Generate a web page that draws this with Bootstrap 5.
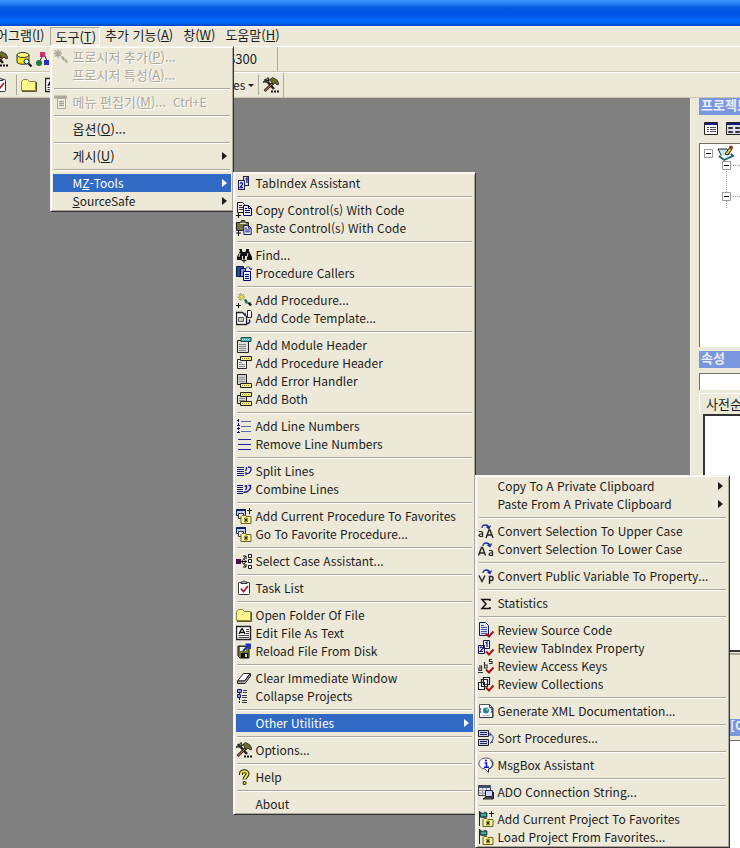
<!DOCTYPE html>
<html lang="ko">
<head>
<meta charset="utf-8">
<meta name="viewport" content="width=device-width, initial-scale=1">
<title>Visual Basic - MZ-Tools</title>
<link rel="stylesheet" href="https://cdn.jsdelivr.net/npm/bootstrap@5.3.0/dist/css/bootstrap.min.css">
<style>
:root{--face:#ece9d8;--shade:#aca899;--hot:#316ac5}
body{background:var(--face);font-family:"Noto Sans CJK KR",sans-serif;font-size:13px;line-height:18px;color:#1c1c1c}
button{font:inherit;color:inherit;line-height:18px}
svg{display:block;flex:none}
.ico{width:16px;height:16px}
.titlebar{height:26px;background:linear-gradient(#3a93fb 0,#2b86f6 3px,#0b60e8 7px,#0055e3 10px,#0257e8 16px,#0567fb 20px,#0565f6 23px,#0242bd 26px)}
.menubar{height:20px;border-top:1px solid #f8f6ee}
.menubar .top-btn{border:0;background:none;padding:0 5px;white-space:nowrap;line-height:16px}
.menubar .top-btn.open{border:1px solid;border-color:var(--shade) #fff #fff var(--shade);padding:0 3px 0 5px;height:19px;line-height:16px}
.menubar>.first{margin-left:-9px}
.band{height:26px;border-top:1px solid #fff;border-bottom:1px solid #c9c5b2}
.band .edge{border-right:1px solid var(--shade)}
.band button{border:0;background:none;padding:0}
.band .clip-l{margin-left:-8px}
.band .wide-end{padding-right:20px}
.covered{width:172px}
.vline{width:1px;height:20px;background:var(--shade)}
.mdi{background:#808080}
.dock{flex:0 0 50px;padding-left:8px;border-left:1px solid #f8f6ee}
.dock-title{background:#7a96df;color:#e9efff;height:17px;line-height:14px;font-weight:700;padding-left:2px;white-space:nowrap;overflow:hidden}
.dock-title.far{padding-left:31px}
.dock-tools{height:28px;gap:6px;padding-left:5px}
.sunk{background:#fff;border:solid #716f64;border-width:1px 0 0 1px}
.tree{height:204px;padding:1px 0 0 4px}
.branch{margin-left:22px;height:47px;border-left:1px dotted #999}
.branch .node{margin-left:-5px;gap:2px}
.branch .node::after{content:"";width:10px;border-top:1px dotted #999}
.branch .node+.node{margin-top:22px}
.combo{appearance:none;height:17px;width:100%;border:solid #716f64;border-width:1px 0 0 1px;background:#fff;margin:5px 0 3px;border-radius:0;padding:0;display:block}
.tabbtn{border:1px solid #fff;border-width:1px 0 0 1px;background:none;padding:0 0 0 6px;height:21px;line-height:16px;white-space:nowrap;overflow:hidden;text-align:left}
.props{border:2px solid #333;border-right:0;margin-left:4px;height:238px}
.immediate-gap{height:66px;border-top:2px solid var(--shade);margin-top:1px}
.menu-pop{position:absolute;z-index:10;list-style:none;margin:0;background:var(--face);border:1px solid;border-color:#f4f2e8 #333 #333 #f4f2e8;box-shadow:inset 1px 1px #fff,inset -1px -1px var(--shade);padding:1px 2px}
.menu-pop li{position:relative}
.menu-pop .cmd{display:flex;align-items:center;width:100%;height:18px;padding:0;border:0;background:none;text-align:left;white-space:nowrap;line-height:18px}
.menu-pop .cmd>.ico,.menu-pop .cmd>.no-ico{width:16px;margin-right:4px;flex:none}
.menu-pop .cmd.hot{background:var(--hot);color:#fff}
.menu-pop .cmd:disabled{color:var(--shade);text-shadow:1px 1px #fff}
.menu-pop .cmd.more::after{content:"";margin-left:auto;margin-right:4px;border:4px solid transparent;border-left:5px solid;border-right:0}
.menu-pop .rule{height:9px;padding:4px 1px 0}
.menu-pop .rule::before{content:"";display:block;height:2px;background:linear-gradient(var(--shade) 50%,#fff 50%)}
.pop-tools{left:0;top:100%;width:184px}
.pop-mz{left:100%;top:-2px;margin-left:2px;width:243px}
.pop-util{left:100%;bottom:-116px;margin-left:2px;width:255px}
.pop-mz,.latin{font-size:12px}
u{text-underline-offset:1px}
</style>
<script src="https://cdn.jsdelivr.net/npm/bootstrap@5.3.0/dist/js/bootstrap.bundle.min.js"></script>
</head>
<body class="vh-100 overflow-hidden d-flex flex-column">
<svg width="0" height="0" class="position-absolute" aria-hidden="true">
<defs>
<symbol id="tab" viewBox="0 0 16 16"><g shape-rendering="crispEdges"><path d="M7.500 1.500h5v9h-5z" fill="#dfe3f5" stroke="#222244"/><path d="M2.500 5.500h6v9h-6z" fill="#dfe3f5" stroke="#222244"/></g><path d="M9.500 4l1.500-1v5M4 8.500c1-1.500 3-.5 2.500.8L4 12.500h3" fill="none" stroke="#1a1aa0" stroke-width="1.300"/></symbol>
<symbol id="page" viewBox="0 0 9 11"><path d="M.5.5h5l3 3v7h-8z" fill="#e8ecff" stroke="#000070"/><path d="M5.500.5v3h3M2 3.500h2M2 5.500h5M2 7.500h5" stroke="#000070" fill="none"/></symbol>
<symbol id="copy" viewBox="0 0 16 16"><path d="M1.500.5h5l2 2v8h-7z" fill="#eee" stroke="#222"/><path d="M3 3.500h3M3 5.500h4M3 7.500h4" stroke="#333"/><use href="#page" x="7" y="3" width="9" height="11"/><path d="M2.500 11v5M0 13.500h5" stroke="#111"/></symbol>
<symbol id="paste" viewBox="0 0 16 16"><path d="M.5 2.500h4l1-2h3l1 2h3v8H.5z" fill="#77743a" stroke="#222"/><path d="M4 3.500h6" stroke="#ddd"/><use href="#page" x="7" y="5" width="9" height="10"/><path d="M2.500 10v6M0 13h5" stroke="#111"/></symbol>
<symbol id="find" viewBox="0 0 16 16"><path d="M3 2h3v2l1 1h2l1-1V2h3v2l3 6v3h-5V9H9v3H7V9H6v4H1v-3l3-6z" fill="#111"/><path d="M4 6l-1 4M12 6l-1 4" stroke="#ddd"/><path d="M8 10v6M5.500 13.500h5" stroke="#111"/></symbol>
<symbol id="callers" viewBox="0 0 16 16"><path d="M.5 1.500h7v10h-7z" fill="#1c4f78" stroke="#102050"/><path d="M4.500 3.500h5v8h-5z" fill="#7d9bc8" stroke="#000070"/><path d="M7.500 6.500h7v9h-7z" fill="#eef" stroke="#000070"/><path d="M9 9.500h4M9 11.500h4M9 13.500h4" stroke="#000090"/><path d="M10 4c0-3 5-3 5 1M13 3l2 2 1-2" fill="none" stroke="#3344a0"/></symbol>
<symbol id="addproc" viewBox="0 0 16 16"><path d="M5 1v8M1.500 5H9M2.500 2l6 6M8 2L3 8" stroke="#8d8f2c"/><circle cx="5.500" cy="5" r="1.500" fill="#e8e04a"/><path d="M8 8l2-1 2 3-2 2z" fill="#126464"/><path d="M11 11l3-1 2 3-2 1z" fill="#111"/><path d="M2.500 11v5M0 13.500h5" stroke="#111"/></symbol>
<symbol id="template" viewBox="0 0 16 16"><path d="M.5 2.500h6l4 4v8H.5z" fill="#fff" stroke="#222" stroke-width="1.300"/><path d="M2.500 7.500h5v4h-5z" stroke="#555" fill="#ccc"/><path d="M11.500.5h3l1 1v6h-4z" fill="#fff" stroke="#222"/><path d="M9 3v3M13 9.500c2 2 0 4-2 4" stroke="#222299" fill="none" stroke-width="1.500"/></symbol>
<symbol id="modhead" viewBox="0 0 16 16"><path d="M1.500 3.500h11v12h-11z" fill="#ddd" stroke="#222"/><path d="M3 7.500h7M3 9.500h7M3 11.500h7M3 13.500h7" stroke="#888"/><path d="M5 .5h10v4H5z" fill="#4cb4bc" stroke="#174b50"/><path d="M6 2.500h8" stroke="#b4f0f0" stroke-dasharray="1 1"/></symbol>
<symbol id="prochead" viewBox="0 0 16 16"><path d="M1.500 4.500h9v9h-9z" fill="#eee" stroke="#222"/><path d="M3 7.500h3M3 9.500h6M3 11.500h6" stroke="#888"/><path d="M4.500 1.500h11v4h-11z" fill="#f2ee86" stroke="#222"/><path d="M6 3.500h8" stroke="#8b8830" stroke-dasharray="1 1"/></symbol>
<symbol id="error" viewBox="0 0 16 16"><path d="M1.500 1.500h9v10h-9z" fill="#ccc" stroke="#222"/><path d="M3 4.500h6M3 6.500h6M3 8.500h6" stroke="#999"/><path d="M4.500 10.500h11v4h-11z" fill="#f2ee86" stroke="#222"/><path d="M6 12.500h8" stroke="#8b8830" stroke-dasharray="1 1"/></symbol>
<symbol id="both" viewBox="0 0 16 16"><path d="M1.500 4.500h9v8h-9z" fill="#ddd" stroke="#222"/><path d="M3 7.500h6M3 9.500h6" stroke="#888"/><path d="M4.500 1.500h11v4h-11zM4.500 10.500h11v4h-11z" fill="#f2ee86" stroke="#222"/><path d="M6 3.500h8M6 12.500h8" stroke="#8b8830" stroke-dasharray="1 1"/></symbol>
<symbol id="addln" viewBox="0 0 16 16"><path d="M5 3.500h10M5 8.500h10M5 13.500h10" stroke="#5a68a4"/><path d="M2.500 1v14" stroke="#111188" stroke-dasharray="3 1"/><path d="M1 2.500h1M1 7.500h3M1 10.500h3M1 14.500h3" stroke="#111188"/></symbol>
<symbol id="remln" viewBox="0 0 16 16"><path d="M2 3.500h13M2 8.500h13M2 13.500h13" stroke="#22229a"/></symbol>
<symbol id="split" viewBox="0 0 16 16"><path d="M1 4.500h7M1 6.500h7M1 8.500h7M1 10.500h7M1 12.500h7" stroke="#1a1a80"/><path d="M10.500 4v2l-1 2M12 4c4 0 4 3 1 6l-3 1M10 9v3" stroke="#1a1a90" stroke-width="1.300" fill="none"/></symbol>
<symbol id="combine" viewBox="0 0 16 16"><path d="M1 4.500h6M1 6.500h6M1 8.500h6M1 10.500h6M1 12.500h6" stroke="#111166"/><path d="M8.500 5h2v2l-1 2M12.500 4.500h2v3l-3 3-4 1" stroke="#1a1a90" stroke-width="1.400" fill="none"/></symbol>
<symbol id="star" viewBox="0 0 11 9"><path d="M.5 1.500l1-1h3l1 1h5v7H.5z" fill="#fbf58b" stroke="#66622a"/><path d="M5.500 2.500v5M3.500 3.500l4 3M7.500 3.500l-4 3" stroke="#222"/></symbol>
<symbol id="favbase" viewBox="0 0 16 16"><path d="M.5 1.500h9v6h-9z" fill="#c3d1e9" stroke="#10205f"/><path d="M1 2h9" stroke="#10205f" stroke-width="2"/><path d="M2.500 5.500h5v5h-5z" fill="#eef" stroke="#333"/><use href="#star" x="4" y="7" width="12" height="9"/></symbol>
<symbol id="favadd" viewBox="0 0 16 16"><use href="#favbase"/><path d="M13.500 0v6M11 2.500h5" stroke="#222"/></symbol>
<symbol id="select" viewBox="0 0 16 16"><path d="M0 6h5v5H0z" fill="#4b1048"/><path d="M4 8.500h7M6 8l4-5M6 9l4 5M7 3h3v3M7 14h3v-3M8 6l2 2.500L8 11" stroke="#111" fill="none"/><path d="M12.500 1.500h3v3h-3zM12.500 6.500h3v3h-3zM12.500 12.500h3v3h-3z" fill="#fff" stroke="#111"/></symbol>
<symbol id="task" viewBox="0 0 16 16"><rect x="2.500" y="2.500" width="11" height="12" rx="1" fill="#fff" stroke="#333"/><path d="M5 3.500V2h1.500l1-1h1l1 1H11v1.500z" fill="#bbb" stroke="#333"/><path d="M5 8.500l2.500 3L12 6" stroke="#a02030" stroke-width="1.800" fill="none"/></symbol>
<symbol id="folder" viewBox="0 0 16 16"><path d="M.5 4.500l2-2h4l2 2h6v9H.5z" fill="#fcf78c" stroke="#8a8640"/><path d="M1 14.500h14.500V5" stroke="#55522a" fill="none"/></symbol>
<symbol id="edit" viewBox="0 0 16 16"><path d="M.5 1.500h14v13H.5z" fill="#fff" stroke="#222" stroke-width="1.400"/><path d="M3 9l2.500-5h1L9 9M4 7.500h4" stroke="#111" fill="none" stroke-width="1.400"/><path d="M10 4.500h3M10 6.500h3M10 8.500h3M2.500 10.500H13M2.500 12.500H13" stroke="#444"/></symbol>
<symbol id="disk" viewBox="0 0 16 16"><path d="M2 3h11v12H4l-2-2z" fill="#77752c" stroke="#111"/><path d="M4 4h6v4H4z" fill="#e8ecf4"/><path d="M5 10h7v5H5z" fill="#111"/><path d="M9 11h2v3H9z" fill="#ddd"/><path d="M7 8l6-6M9.500 1.500H14V6" stroke="#1530c8" stroke-width="1.800" fill="none"/></symbol>
<symbol id="eraser" viewBox="0 0 16 16"><path d="M1.500 11l6-7.500h6.500l-5.500 7.500z" fill="#fff" stroke="#222"/><path d="M1.500 11v2.500H9l5.500-7.500V3.500L8.500 11z" fill="#aaa" stroke="#222"/></symbol>
<symbol id="collapse" viewBox="0 0 16 16"><path d="M3.500 1v14" stroke="#111188" stroke-dasharray="2 1"/><path d="M1.500 1.500h4v3h-4zM1.500 6.500h3v3h-3z" fill="#8ea0e0" stroke="#111188"/><path d="M7 2.500h4M7 4.500h4M6 7.500h5M6 9.500h5M6 12.500h5M6 14.500h5" stroke="#333"/></symbol>
<symbol id="tools" viewBox="0 0 16 16"><path d="M2 2l9 10" stroke="#222" stroke-width="2.600"/><path d="M0 5.500l2-1.500 2 1L6 3 4.500.5" stroke="#333" stroke-width="1.800" fill="none"/><path d="M10.500 5.500L1.500 14" stroke="#3a1810" stroke-width="2.600"/><path d="M10 6L2 13.500" stroke="#c09a6a"/><path d="M7 2.500L9.500.5 14 3l2 4-2 1-2-2-2 1.500z" fill="#6c6c28" stroke="#222" stroke-width=".8"/><path d="M8 14.500h2M11 14.500h2M14 14.500h2" stroke="#111" stroke-width="2"/></symbol>
<symbol id="help" viewBox="0 0 16 16"><path d="M5 6V4.500C5 1.500 12 1.500 11.500 5c0 2.500-3 2.500-3 5.500" stroke="#222" stroke-width="4" fill="none"/><circle cx="8.500" cy="14" r="2" fill="#222"/><path d="M5 6V4.500C5 1.500 12 1.500 11.500 5c0 2.500-3 2.500-3 5.500" stroke="#efe63a" stroke-width="2" fill="none"/><circle cx="8.500" cy="14" r="1" fill="#efe63a"/></symbol>
<symbol id="arc" viewBox="0 0 16 16"><path d="M4 5c0-4 6-4 7 0M8.500 4l2.500 1.500 1.500-3" stroke="#1c2c9c" stroke-width="1.300" fill="none"/></symbol>
<symbol id="upper" viewBox="0 0 16 16"><use href="#arc"/><path d="M1 8.500h2.500l1 1V14M4 11H2l-1 1.500 1 1h2" stroke="#222" stroke-width="1.200" fill="none"/><path d="M8 15l3-8h1l3 8M9 12h5" stroke="#222" stroke-width="1.400" fill="none"/></symbol>
<symbol id="lower" viewBox="0 0 16 16"><use href="#arc" x="1"/><path d="M.5 14.500l3-8h1l3 8M1.500 12h5" stroke="#222" stroke-width="1.400" fill="none"/><path d="M11 9.500h2.500l1 1V15M14 12h-2l-1 1.500 1 1h2" stroke="#222" stroke-width="1.200" fill="none"/></symbol>
<symbol id="vp" viewBox="0 0 16 16"><use href="#arc" x="1"/><path d="M1 7.500l3 6 3-6" stroke="#222" stroke-width="1.400" fill="none"/><path d="M11.500 16V8.500h2.500l1 1v2l-1 1h-2.500" stroke="#222" stroke-width="1.400" fill="none"/></symbol>
<symbol id="sigma" viewBox="0 0 16 16"><path d="M12 6V4.500H4L8 9l-4 4.500h8V12" stroke="#111" stroke-width="1.500" fill="none"/></symbol>
<symbol id="check" viewBox="0 0 16 16"><path d="M8 11.500l3 3 4.500-5" stroke="#a3161e" stroke-width="2" fill="none"/></symbol>
<symbol id="rsource" viewBox="0 0 16 16"><path d="M1.500.5h6l3 3v10h-9z" fill="#dfe5fb" stroke="#181850"/><path d="M3 3.500h3M3 5.500h6M3 7.500h6M3 9.500h6M3 11.500h5" stroke="#4050b0"/><use href="#check"/></symbol>
<symbol id="rtab" viewBox="0 0 16 16"><path d="M5.500.5h6v8h-6zM.5 5.500h6v8h-6z" fill="#e8ecff" stroke="#181850"/><path d="M7.500 3L9 2v5M2 8c1-1.500 3-.5 2.500.8L2 11.500h3" fill="none" stroke="#1a1aa0" stroke-width="1.200"/><use href="#check"/></symbol>
<symbol id="raccess" viewBox="0 0 16 16"><path d="M1 8h2.500v4.500H1V10h2M6.500 4v6H9V7H6.500M14 1.500h-2.500v2H14v2h-3" stroke="#333" stroke-width="1.200" fill="none"/><path d="M0 14.500h5" stroke="#333"/><use href="#check"/></symbol>
<symbol id="rcoll" viewBox="0 0 16 16"><path d="M5.500 1.500h6v7h-6zM3.500 3.500h6v7h-6zM.5 6.500h6v7h-6z" fill="#fff" stroke="#222" stroke-width="1.200"/><use href="#check"/></symbol>
<symbol id="xml" viewBox="0 0 16 16"><path d="M1.500 1.500h10l3 3v10h-13z" fill="#fff" stroke="#555"/><path d="M11.500 1.500v3h3M2 14.500h13V5" stroke="#333" fill="none"/><circle cx="8" cy="7.500" r="3" fill="#28808c"/><path d="M3 5L2 7.500 3 10M13 5l1 2.500-1 2.500" stroke="#2a50b0" fill="none"/><circle cx="9" cy="6.500" r="1" fill="#9fe0d8"/><path d="M4 12.500h8" stroke="#b0b8d0"/></symbol>
<symbol id="sort" viewBox="0 0 16 16"><path d="M.5.5h10v6H.5zM.5 9.500h10v6H.5z" fill="#c5cdea" stroke="#222"/><path d="M2 2.500h7M2 4.500h7M2 11.500h7M2 13.500h7" stroke="#222266"/><path d="M12 4c4 1 4 6 1 8M12 13l3-1M12 2.500V6" stroke="#1c2c9c" fill="none"/></symbol>
<symbol id="msg" viewBox="0 0 16 16"><path d="M8 1c9 0 9 10 2.500 11v3.500L7 12C-1.500 11.500-1 1 8 1z" fill="#fff" stroke="#555"/><path d="M12.500 3c4 4 1 8-2 9v3" fill="none" stroke="#222"/><path d="M6.500 6H8.500v4M6 10.300h5" stroke="#1010d8" stroke-width="1.500" fill="none"/><circle cx="8" cy="3.500" r="1.100" fill="#1010d8"/></symbol>
<symbol id="ado" viewBox="0 0 16 16"><path d="M.5 1.500h12v10H.5z" fill="#e8e8f0" stroke="#444"/><path d="M1 3h12" stroke="#444c78" stroke-width="2"/><path d="M4.500 4v7M8.500 4v7M1 6.500h11M1 9h11" stroke="#99a"/><path d="M7.500 6.500h7v6h-7z" fill="#cdd6f6" stroke="#222244"/><path d="M5 15h10v-2H8zM15.500 8v7" fill="#667" stroke="#222"/></symbol>
<symbol id="projload" viewBox="0 0 16 16"><path d="M1.500 0v15" stroke="#223"/><path d="M2 1l3 1.500 2-1.500 2 1v4L6 7 2 6z" fill="#1c6a68" stroke="#123" stroke-width=".6"/><path d="M3 4h5" stroke="#8cc"/><use href="#star" x="4" y="7" width="12" height="9"/></symbol>
<symbol id="projadd" viewBox="0 0 16 16"><use href="#projload"/><path d="M13.500 0v6M11 2.500h5" stroke="#222"/></symbol>
<symbol id="procoff" viewBox="0 0 16 16"><path d="M5 0v9M1 4.500h8M2 1.500l6 6M8 1.500l-6 6" stroke="#aca899" stroke-width="1.300"/><path d="M8 8l2-1 2 3-2 2zM11 11l2-1 2 3-2 1z" fill="#aca899"/></symbol>
<symbol id="menuoff" viewBox="0 0 16 16"><path d="M1 3h13" stroke="#aca899" stroke-width="3"/><path d="M4.500 4.500h8v10h-8z" fill="#f4f2e8" stroke="#aca899"/><path d="M6 7.500h5M6 9.500h5M6 11.500h5" stroke="#aca899" stroke-width="1.300"/></symbol>
<symbol id="db" viewBox="0 0 16 16"><path d="M1 4v7c0 3 12 3 12 0V4" fill="#eee22c" stroke="#333"/><ellipse cx="7" cy="4" rx="6" ry="2.500" fill="#fbf780" stroke="#333"/><circle cx="10.500" cy="10.500" r="2.500" fill="#cfe" stroke="#222"/><path d="M12.500 12.500L15.500 15.500" stroke="#111" stroke-width="2"/></symbol>
<symbol id="shapes" viewBox="0 0 16 16"><path d="M3 11L8 3l3 7" stroke="#225" fill="none"/><circle cx="3" cy="12" r="3" fill="#22793a"/><path d="M4 1h5v5H4z" fill="#cc2f6a"/><path d="M8 9h5v5H8z" fill="#2433b8"/></symbol>
<symbol id="form" viewBox="0 0 16 16"><path d="M.5 1.500h13v12H.5z" fill="#fff" stroke="#222"/><path d="M1 3h13" stroke="#141c7c" stroke-width="2"/><path d="M3 6.500h2M3 8.500h2M3 10.500h2M6 6.500h6M6 8.500h6M6 10.500h6" stroke="#555"/></symbol>
<symbol id="objview" viewBox="0 0 16 16"><path d="M.5 1.500h15v12H.5z" fill="#dde" stroke="#222"/><path d="M1 3h15" stroke="#141c7c" stroke-width="2"/><path d="M2.500 6.500h4v1h-4zM2.500 10.500h4v1h-4zM9.500 6.500h4v1h-4zM9.500 10.500h4v1h-4z" fill="#fff" stroke="#333"/></symbol>
<symbol id="vbproj" viewBox="0 0 18 16"><path d="M1 4h9l3 6-8 2z" fill="#bfe8ec" stroke="#222"/><path d="M2 11l5 4 9-4-2-2" stroke="#156468" stroke-width="1.800" fill="#eee"/><path d="M8 9l5-7 2 2-4 6z" fill="#e8c838" stroke="#222"/><circle cx="14" cy="2.500" r="2" fill="#8c3c28"/></symbol>
<symbol id="minus" viewBox="0 0 9 9"><path d="M.5.5h8v8h-8z" fill="#fff" stroke="#999"/><path d="M2 4.500h5" stroke="#111"/></symbol>
</defs>
</svg>

<header>
  <div class="titlebar"></div>
  <nav class="menubar d-flex align-items-start" aria-label="메뉴">
    <button type="button" class="top-btn first">어그램(<u>I</u>)</button>
    <div class="position-relative">
      <button type="button" class="top-btn open" aria-expanded="true">도구(<u>T</u>)</button>
      <ul class="menu-pop pop-tools">
        <li><button class="cmd" disabled><svg class="ico"><use href="#procoff"/></svg>프로시저 추가(<u>P</u>)...</button></li>
        <li><button class="cmd" disabled><span class="no-ico"></span>프로시저 특성(<u>A</u>)...</button></li>
        <li class="rule"></li>
        <li><button class="cmd" disabled><svg class="ico"><use href="#menuoff"/></svg>메뉴 편집기(<u>M</u>)...<span class="latin ms-auto me-4">Ctrl+E</span></button></li>
        <li class="rule"></li>
        <li><button class="cmd"><span class="no-ico"></span>옵션(<u>O</u>)...</button></li>
        <li class="rule"></li>
        <li><button class="cmd more"><span class="no-ico"></span>게시(<u>U</u>)</button></li>
        <li class="rule"></li>
        <li><button class="cmd more hot" aria-expanded="true"><span class="no-ico"></span><span class="latin">M<u>Z</u>-Tools</span></button>
          <ul class="menu-pop pop-mz">
            <li><button class="cmd"><svg class="ico"><use href="#tab"/></svg>TabIndex Assistant</button></li>
            <li class="rule"></li>
            <li><button class="cmd"><svg class="ico"><use href="#copy"/></svg>Copy Control(s) With Code</button></li>
            <li><button class="cmd"><svg class="ico"><use href="#paste"/></svg>Paste Control(s) With Code</button></li>
            <li class="rule"></li>
            <li><button class="cmd"><svg class="ico"><use href="#find"/></svg>Find...</button></li>
            <li><button class="cmd"><svg class="ico"><use href="#callers"/></svg>Procedure Callers</button></li>
            <li class="rule"></li>
            <li><button class="cmd"><svg class="ico"><use href="#addproc"/></svg>Add Procedure...</button></li>
            <li><button class="cmd"><svg class="ico"><use href="#template"/></svg>Add Code Template...</button></li>
            <li class="rule"></li>
            <li><button class="cmd"><svg class="ico"><use href="#modhead"/></svg>Add Module Header</button></li>
            <li><button class="cmd"><svg class="ico"><use href="#prochead"/></svg>Add Procedure Header</button></li>
            <li><button class="cmd"><svg class="ico"><use href="#error"/></svg>Add Error Handler</button></li>
            <li><button class="cmd"><svg class="ico"><use href="#both"/></svg>Add Both</button></li>
            <li class="rule"></li>
            <li><button class="cmd"><svg class="ico"><use href="#addln"/></svg>Add Line Numbers</button></li>
            <li><button class="cmd"><svg class="ico"><use href="#remln"/></svg>Remove Line Numbers</button></li>
            <li class="rule"></li>
            <li><button class="cmd"><svg class="ico"><use href="#split"/></svg>Split Lines</button></li>
            <li><button class="cmd"><svg class="ico"><use href="#combine"/></svg>Combine Lines</button></li>
            <li class="rule"></li>
            <li><button class="cmd"><svg class="ico"><use href="#favadd"/></svg>Add Current Procedure To Favorites</button></li>
            <li><button class="cmd"><svg class="ico"><use href="#favbase"/></svg>Go To Favorite Procedure...</button></li>
            <li class="rule"></li>
            <li><button class="cmd"><svg class="ico"><use href="#select"/></svg>Select Case Assistant...</button></li>
            <li class="rule"></li>
            <li><button class="cmd"><svg class="ico"><use href="#task"/></svg>Task List</button></li>
            <li class="rule"></li>
            <li><button class="cmd"><svg class="ico"><use href="#folder"/></svg>Open Folder Of File</button></li>
            <li><button class="cmd"><svg class="ico"><use href="#edit"/></svg>Edit File As Text</button></li>
            <li><button class="cmd"><svg class="ico"><use href="#disk"/></svg>Reload File From Disk</button></li>
            <li class="rule"></li>
            <li><button class="cmd"><svg class="ico"><use href="#eraser"/></svg>Clear Immediate Window</button></li>
            <li><button class="cmd"><svg class="ico"><use href="#collapse"/></svg>Collapse Projects</button></li>
            <li class="rule"></li>
            <li><button class="cmd more hot" aria-expanded="true"><span class="no-ico"></span>Other Utilities</button>
              <ul class="menu-pop pop-util">
                <li><button class="cmd more"><span class="no-ico"></span>Copy To A Private Clipboard</button></li>
                <li><button class="cmd more"><span class="no-ico"></span>Paste From A Private Clipboard</button></li>
                <li class="rule"></li>
                <li><button class="cmd"><svg class="ico"><use href="#upper"/></svg>Convert Selection To Upper Case</button></li>
                <li><button class="cmd"><svg class="ico"><use href="#lower"/></svg>Convert Selection To Lower Case</button></li>
                <li class="rule"></li>
                <li><button class="cmd"><svg class="ico"><use href="#vp"/></svg>Convert Public Variable To Property...</button></li>
                <li class="rule"></li>
                <li><button class="cmd"><svg class="ico"><use href="#sigma"/></svg>Statistics</button></li>
                <li class="rule"></li>
                <li><button class="cmd"><svg class="ico"><use href="#rsource"/></svg>Review Source Code</button></li>
                <li><button class="cmd"><svg class="ico"><use href="#rtab"/></svg>Review TabIndex Property</button></li>
                <li><button class="cmd"><svg class="ico"><use href="#raccess"/></svg>Review Access Keys</button></li>
                <li><button class="cmd"><svg class="ico"><use href="#rcoll"/></svg>Review Collections</button></li>
                <li class="rule"></li>
                <li><button class="cmd"><svg class="ico"><use href="#xml"/></svg>Generate XML Documentation...</button></li>
                <li class="rule"></li>
                <li><button class="cmd"><svg class="ico"><use href="#sort"/></svg>Sort Procedures...</button></li>
                <li class="rule"></li>
                <li><button class="cmd"><svg class="ico"><use href="#msg"/></svg>MsgBox Assistant</button></li>
                <li class="rule"></li>
                <li><button class="cmd"><svg class="ico"><use href="#ado"/></svg>ADO Connection String...</button></li>
                <li class="rule"></li>
                <li><button class="cmd"><svg class="ico"><use href="#projadd"/></svg>Add Current Project To Favorites</button></li>
                <li><button class="cmd"><svg class="ico"><use href="#projload"/></svg>Load Project From Favorites...</button></li>
              </ul>
            </li>
            <li class="rule"></li>
            <li><button class="cmd"><svg class="ico"><use href="#tools"/></svg>Options...</button></li>
            <li class="rule"></li>
            <li><button class="cmd"><svg class="ico"><use href="#help"/></svg>Help</button></li>
            <li class="rule"></li>
            <li><button class="cmd"><span class="no-ico"></span>About</button></li>
          </ul>
        </li>
        <li><button class="cmd more"><span class="no-ico"></span><span class="latin"><u>S</u>ourceSafe</span></button></li>
      </ul>
    </div>
    <button type="button" class="top-btn">추가 기능(<u>A</u>)</button>
    <button type="button" class="top-btn">창(<u>W</u>)</button>
    <button type="button" class="top-btn">도움말(<u>H</u>)</button>
  </nav>
  <div class="band d-flex">
    <div class="edge wide-end d-flex align-items-center">
      <button aria-label="도구 상자" class="clip-l"><svg class="ico"><use href="#tools"/></svg></button>
      <button aria-label="데이터 뷰" class="ms-2"><svg class="ico"><use href="#db"/></svg></button>
      <button aria-label="구성 요소" class="ms-1"><svg class="ico"><use href="#shapes"/></svg></button>
      <span class="covered me-1"></span><span>6300</span>
    </div>
  </div>
  <div class="band d-flex">
    <div class="edge d-flex align-items-center pe-1">
      <button aria-label="작업 목록" class="clip-l"><svg class="ico"><use href="#task"/></svg></button>
      <span class="vline ms-2 me-1"></span>
      <button aria-label="폴더"><svg class="ico"><use href="#folder"/></svg></button>
      <button aria-label="파일" class="ms-2"><svg class="ico"><use href="#edit"/></svg></button>
      <span class="covered"></span>
      <button class="latin dropdown-toggle">es</button>
      <span class="vline mx-1"></span>
      <button aria-label="옵션"><svg class="ico"><use href="#tools"/></svg></button>
    </div>
  </div>
</header>

<main class="d-flex flex-grow-1 overflow-hidden">
  <section class="mdi flex-grow-1"></section>
  <aside class="dock d-flex flex-column overflow-hidden">
    <div class="dock-title">프로젝트</div>
    <div class="dock-tools d-flex align-items-center"><svg class="ico"><use href="#form"/></svg><svg class="ico"><use href="#objview"/></svg></div>
    <div class="sunk tree">
      <div class="d-flex align-items-center gap-1"><svg width="9" height="9"><use href="#minus"/></svg><svg width="18" height="16"><use href="#vbproj"/></svg></div>
      <div class="branch">
        <div class="node d-flex align-items-center"><svg width="9" height="9"><use href="#minus"/></svg></div>
        <div class="node d-flex align-items-center"><svg width="9" height="9"><use href="#minus"/></svg></div>
      </div>
    </div>
    <div class="dock-title mt-1">속성</div>
    <select class="combo" aria-label="개체"></select>
    <button type="button" class="tabbtn">사전순</button>
    <div class="props bg-white"></div>
    <div class="immediate-gap"></div>
    <div class="dock-title far">[이</div>
    <div class="sunk flex-grow-1 mt-1"></div>
  </aside>
</main>
</body>
</html>
